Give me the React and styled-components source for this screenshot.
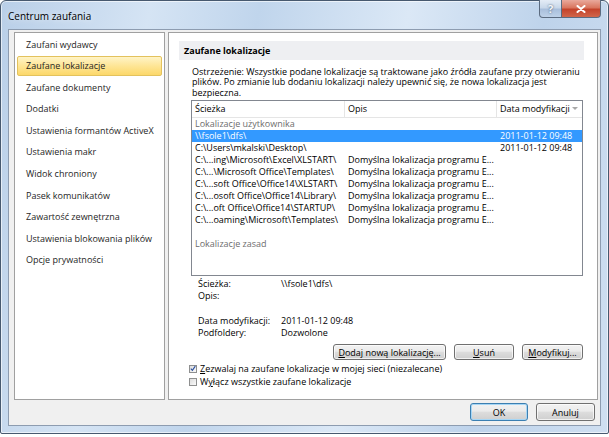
import React from 'react';
import styled, { createGlobalStyle, css } from 'styled-components';

const GlobalStyle = createGlobalStyle`
  html, body {
    margin: 0;
    padding: 0;
    background: #ffffff;
  }
  body {
    font-family: "Open Sans", "Noto Sans", "DejaVu Sans", sans-serif;
    font-size: 9px;
    color: #000;
  }
  * {
    box-sizing: border-box;
  }
`;

const Window = styled.div`
  width: 609px;
  height: 434px;
  display: flex;
  flex-direction: column;
  padding: 0 7px 7px 7px;
  border: 1px solid #47596f;
  border-radius: 6px 6px 2px 2px;
  background: linear-gradient(100deg, #b9cfe8 0%, #d5e4f4 22%, #c0d5ec 38%, #dbe8f6 60%, #bed3eb 80%, #cfdff1 100%);
  box-shadow: inset 0 0 0 1px rgba(255, 255, 255, 0.6);
`;

const TitleBar = styled.div`
  height: 28px;
  display: flex;
  justify-content: space-between;
  align-items: flex-start;
`;

const Title = styled.div`
  padding-top: 8px;
  font-size: 10px;
  color: #000;
  text-shadow: 0 0 6px rgba(255, 255, 255, 0.9);
`;

const CaptionButtons = styled.div`
  display: flex;
  margin-top: -1px;
`;

const CaptionButton = styled.div`
  height: 18px;
  display: flex;
  align-items: center;
  justify-content: center;
  border: 1px solid #5b6b80;
  border-top: none;
  color: #fff;
  font-weight: bold;
  ${(p) =>
    p.$close
      ? css`
          width: 39px;
          border-radius: 0 0 4px 0;
          border-left: none;
          background: linear-gradient(#e9a99c 0%, #d9765f 45%, #c4432b 55%, #d1664a 100%);
          font-size: 11px;
          text-shadow: 0 0 2px #5a1408;
        `
      : css`
          width: 23px;
          border-radius: 0 0 0 4px;
          background: linear-gradient(#e4ecf6 0%, #c9d8ea 45%, #a9bfdc 55%, #bed1e8 100%);
          color: #f4f7fb;
          font-size: 11px;
          text-shadow: 0 0 2px #34475f;
        `}
`;

const Client = styled.div`
  flex: 1;
  display: flex;
  flex-direction: column;
  background: #f0f0f0;
  border: 1px solid #8d9cb0;
  padding: 2px 3px 0 5px;
`;

const Main = styled.div`
  flex: 1;
  display: grid;
  grid-template-columns: 151px 430px;
  gap: 3px;
`;

const Panel = styled.div`
  background: #ffffff;
  border: 1px solid #a0a0a0;
`;

const NavList = styled(Panel)`
  display: flex;
  flex-direction: column;
  gap: 1.6px;
  padding: 1px 2px;
`;

const NavItem = styled.div`
  height: 20px;
  display: flex;
  align-items: center;
  padding-left: 8px;
  border: 1px solid transparent;
  border-radius: 2px;
  color: #1e1e1e;
  ${(p) =>
    p.$active &&
    css`
      border-color: #e3c25d;
      background: linear-gradient(#fff4c7 0%, #fee595 50%, #fcd86a 100%);
    `}
`;

const Content = styled(Panel)`
  display: flex;
  flex-direction: column;
  padding: 8px 13px 0 10px;
`;

const SectionHeader = styled.div`
  height: 19px;
  display: flex;
  align-items: center;
  padding-left: 5px;
  background: #eeeff2;
  font-weight: bold;
`;

const Body = styled.div`
  display: flex;
  flex-direction: column;
  padding: 0 1px 0 12px;
`;

const Warning = styled.p`
  margin: 7px 0 0 1px;
  line-height: 10.3px;
`;

const ListBox = styled.div`
  margin-top: 2px;
  height: 176px;
  border: 1px solid #828790;
  background: #fff;
`;

const HeaderRow = styled.div`
  height: 17px;
  display: grid;
  grid-template-columns: 152px 152px 1fr;
  border-bottom: 1px solid #e5e5e5;
`;

const HeaderCell = styled.div`
  display: flex;
  align-items: center;
  justify-content: space-between;
  padding: 0 4px 0 3px;
  border-left: ${(p) => (p.$first ? 'none' : '1px solid #e5e5e5')};
`;

const SortArrow = styled.span`
  width: 0;
  height: 0;
  border-left: 3px solid transparent;
  border-right: 3px solid transparent;
  border-top: 3px solid #a8a8a8;
`;

const GroupLabel = styled.div`
  height: 12px;
  line-height: 12px;
  padding-left: 3px;
  margin-top: ${(p) => p.$gap || 0}px;
  color: #6d6d6d;
`;

const Row = styled.div`
  height: 12px;
  display: grid;
  grid-template-columns: 152px 152px 1fr;
  line-height: 12px;
  white-space: nowrap;
  ${(p) =>
    p.$selected &&
    css`
      background: #3399ff;
      color: #fff;
    `}
`;

const Cell = styled.div`
  padding-left: ${(p) => (p.$pad ? p.$pad : 3)}px;
  overflow: hidden;
`;

const Details = styled.div`
  margin-top: 2px;
  padding-left: 7px;
  display: grid;
  grid-template-columns: 83px 1fr;
  grid-auto-rows: 12.3px;
  line-height: 12.3px;
`;

const ButtonRow = styled.div`
  display: flex;
  justify-content: flex-end;
  gap: ${(p) => p.$gap || 8}px;
  margin-top: ${(p) => p.$top || 0}px;
`;

const Button = styled.div`
  width: ${(p) => p.$w}px;
  height: ${(p) => p.$h || 16}px;
  display: flex;
  align-items: center;
  justify-content: center;
  border: 1px solid ${(p) => (p.$default ? '#3c7fb1' : '#707070')};
  border-radius: 3px;
  background: linear-gradient(#f2f2f2 0%, #ebebeb 45%, #dddddd 50%, #cfcfcf 100%);
  box-shadow: inset 0 0 0 1px ${(p) => (p.$default ? '#a6d6f5' : 'rgba(255,255,255,0.7)')};
  color: #000;
`;

const Key = styled.span`
  text-decoration: underline;
`;

const CheckRow = styled.label`
  display: flex;
  align-items: center;
  gap: 3px;
  height: 13px;
  margin-left: -2px;
`;

const Box = styled.span`
  width: 8px;
  height: 8px;
  border: 1px solid #8e8f8f;
  background: linear-gradient(135deg, #dcdcdc, #fbfbfb);
  display: flex;
  align-items: center;
  justify-content: center;
`;

const Footer = styled.div`
  height: 25px;
  padding: 3px 2px 0 0;
`;

const navItems = [
  'Zaufani wydawcy',
  'Zaufane lokalizacje',
  'Zaufane dokumenty',
  'Dodatki',
  'Ustawienia formantów ActiveX',
  'Ustawienia makr',
  'Widok chroniony',
  'Pasek komunikatów',
  'Zawartość zewnętrzna',
  'Ustawienia blokowania plików',
  'Opcje prywatności',
];

const desc = 'Domyślna lokalizacja programu E...';

const rows = [
  { path: '\\\\fsole1\\dfs\\', desc: '', date: '2011-01-12 09:48', selected: true },
  { path: 'C:\\Users\\mkalski\\Desktop\\', desc: '', date: '2011-01-12 09:48' },
  { path: 'C:\\...ing\\Microsoft\\Excel\\XLSTART\\', desc, date: '' },
  { path: 'C:\\...\\Microsoft Office\\Templates\\', desc, date: '' },
  { path: 'C:\\...soft Office\\Office14\\XLSTART\\', desc, date: '' },
  { path: 'C:\\...osoft Office\\Office14\\Library\\', desc, date: '' },
  { path: 'C:\\...oft Office\\Office14\\STARTUP\\', desc, date: '' },
  { path: 'C:\\...oaming\\Microsoft\\Templates\\', desc, date: '' },
];

function Check({ checked }) {
  return (
    <Box>
      {checked && (
        <svg width="7" height="7" viewBox="0 0 7 7">
          <path d="M1 3.6 L2.8 5.6 L6.2 0.8" fill="none" stroke="#2a4f9e" strokeWidth="1.3" />
        </svg>
      )}
    </Box>
  );
}

export default function App() {
  return (
    <>
      <GlobalStyle />
      <Window>
        <TitleBar>
          <Title>Centrum zaufania</Title>
          <CaptionButtons>
            <CaptionButton>?</CaptionButton>
            <CaptionButton $close>
              <svg width="10" height="8" viewBox="0 0 10 8">
                <path d="M1.5 1 L8.5 7 M8.5 1 L1.5 7" stroke="#fff" strokeWidth="2" strokeLinecap="round" />
              </svg>
            </CaptionButton>
          </CaptionButtons>
        </TitleBar>

        <Client>
          <Main>
            <NavList>
              {navItems.map((item, i) => (
                <NavItem key={item} $active={i === 1}>
                  {item}
                </NavItem>
              ))}
            </NavList>

            <Content>
              <SectionHeader>Zaufane lokalizacje</SectionHeader>
              <Body>
                <Warning>
                  Ostrzeżenie: Wszystkie podane lokalizacje są traktowane jako źródła zaufane przy otwieraniu
                  plików. Po zmianie lub dodaniu lokalizacji należy upewnić się, że nowa lokalizacja jest
                  bezpieczna.
                </Warning>

                <ListBox>
                  <HeaderRow>
                    <HeaderCell $first>Ścieżka</HeaderCell>
                    <HeaderCell>Opis</HeaderCell>
                    <HeaderCell>
                      Data modyfikacji
                      <SortArrow />
                    </HeaderCell>
                  </HeaderRow>
                  <GroupLabel>Lokalizacje użytkownika</GroupLabel>
                  {rows.map((r) => (
                    <Row key={r.path} $selected={r.selected}>
                      <Cell>{r.path}</Cell>
                      <Cell $pad={4}>{r.desc}</Cell>
                      <Cell $pad={4}>{r.date}</Cell>
                    </Row>
                  ))}
                  <GroupLabel $gap={12}>Lokalizacje zasad</GroupLabel>
                </ListBox>

                <Details>
                  <span>Ścieżka:</span>
                  <span>\\fsole1\dfs\</span>
                  <span>Opis:</span>
                  <span />
                  <span />
                  <span />
                  <span>Data modyfikacji:</span>
                  <span>2011-01-12 09:48</span>
                  <span>Podfoldery:</span>
                  <span>Dozwolone</span>
                </Details>

                <ButtonRow $top={5} $gap={8}>
                  <Button $w={113}>
                    <span>
                      <Key>D</Key>odaj nową lokalizację...
                    </span>
                  </Button>
                  <Button $w={60}>
                    <span>
                      <Key>U</Key>suń
                    </span>
                  </Button>
                  <Button $w={61}>
                    <span>
                      <Key>M</Key>odyfikuj...
                    </span>
                  </Button>
                </ButtonRow>

                <CheckRow style={{ marginTop: 2 }}>
                  <Check checked />
                  <span>
                    <Key>Z</Key>ezwalaj na zaufane lokalizacje w mojej sieci (niezalecane)
                  </span>
                </CheckRow>
                <CheckRow>
                  <Check />
                  <span>
                    W<Key>y</Key>łącz wszystkie zaufane lokalizacje
                  </span>
                </CheckRow>
              </Body>
            </Content>
          </Main>

          <Footer>
            <ButtonRow $gap={8}>
              <Button $w={58} $h={18} $default>
                OK
              </Button>
              <Button $w={59} $h={18}>
                Anuluj
              </Button>
            </ButtonRow>
          </Footer>
        </Client>
      </Window>
    </>
  );
}
